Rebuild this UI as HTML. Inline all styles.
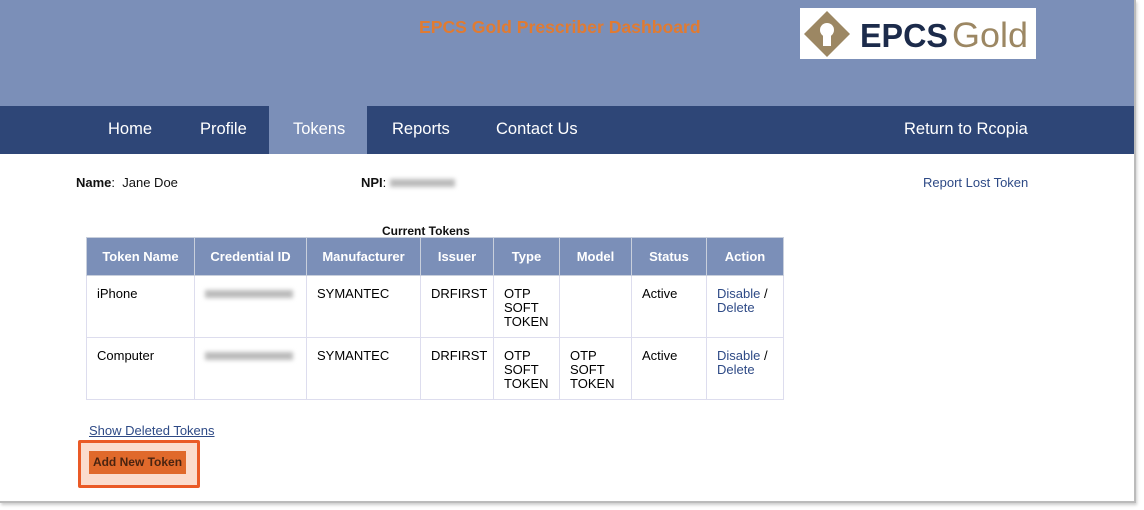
<!DOCTYPE html>
<html><head><style>
body{margin:0;width:1144px;height:510px;background:#fff;font-family:"Liberation Sans",Arial,sans-serif;position:relative;overflow:hidden}
.frame{position:absolute;left:0;top:0;width:1134px;height:501px;border-right:2px solid #bbb;border-bottom:2px solid #bbb;box-shadow:1px 2px 3px #ccc}
.hdr{position:absolute;left:0;top:0;width:1134px;height:106px;background:#7b8fb8}
.title{position:absolute;left:419px;top:17px;color:#e07b32;font-weight:bold;font-size:17.6px}
.logo{position:absolute;left:800px;top:8px;width:236px;height:51px;background:#fff}
.nav{position:absolute;left:0;top:106px;width:1134px;height:48px;background:#2e4677}
.nav span{position:absolute;top:14px;color:#fff;font-size:16.5px}
.tab{position:absolute;left:269px;top:106px;width:98px;height:48px;background:#7b8fb8}
.t{position:absolute;font-size:13px;color:#111}
a{color:#2e4a86;text-decoration:none}
table{position:absolute;left:86px;top:237px;border-collapse:collapse;font-size:13px;table-layout:fixed;width:697px}
th{background:#7b8fb8;color:#fff;height:37px;border:1px solid #c8cfdc;font-weight:bold;padding:0}
td{border:1px solid #dde;vertical-align:top;padding:11px 10px 0;height:50px;line-height:14px;overflow:hidden}
.blur{display:inline-block;width:88px;height:8px;background:#bbb;filter:blur(2px);margin-top:3px}
</style></head><body>
<div class="frame"></div>
<div class="hdr"></div>
<div class="title">EPCS Gold Prescriber Dashboard</div>
<div class="logo">
<svg width="236" height="51" viewBox="0 0 236 51"><polygon points="27,3 50,26 27,49 4,26" fill="#9c8763"/><circle cx="27" cy="22" r="7" fill="#fff"/><rect x="23" y="24" width="8" height="14" fill="#fff"/>
<text x="60" y="39" font-family="Liberation Sans" font-weight="bold" font-size="33" fill="#1c2b4b" textLength="88" lengthAdjust="spacingAndGlyphs">EPCS</text><text x="152" y="39" font-family="Liberation Sans" font-size="35" fill="#9c8763" textLength="76" lengthAdjust="spacingAndGlyphs">Gold</text></svg>
</div>
<div class="nav"></div><div class="tab"></div>
<div class="nav" style="background:none">
<span style="left:108px">Home</span><span style="left:200px">Profile</span><span style="left:293px">Tokens</span><span style="left:392px">Reports</span><span style="left:496px">Contact Us</span><span style="left:904px">Return to Rcopia</span></div>
<div class="t" style="left:76px;top:175px"><b>Name</b>:&nbsp; Jane Doe</div>
<div class="t" style="left:361px;top:175px"><b>NPI</b>: <span class="blur" style="width:65px"></span></div>
<div class="t" style="left:923px;top:175px"><a>Report Lost Token</a></div>
<div class="t" style="left:382px;top:224px;font-weight:bold;font-size:12px">Current Tokens</div>
<table>
<colgroup><col style="width:108px"><col style="width:112px"><col style="width:114px"><col style="width:73px"><col style="width:66px"><col style="width:72px"><col style="width:75px"><col style="width:77px"></colgroup>
<tr><th>Token Name</th><th>Credential ID</th><th>Manufacturer</th><th>Issuer</th><th>Type</th><th>Model</th><th>Status</th><th>Action</th></tr>
<tr><td>iPhone</td><td><span class="blur"></span></td><td>SYMANTEC</td><td>DRFIRST</td><td>OTP<br>SOFT<br>TOKEN</td><td></td><td>Active</td><td><a>Disable</a> /<br><a>Delete</a></td></tr>
<tr><td>Computer</td><td><span class="blur"></span></td><td>SYMANTEC</td><td>DRFIRST</td><td>OTP<br>SOFT<br>TOKEN</td><td>OTP<br>SOFT<br>TOKEN</td><td>Active</td><td><a>Disable</a> /<br><a>Delete</a></td></tr>
</table>
<div class="t" style="left:89px;top:423px"><a style="text-decoration:underline">Show Deleted Tokens</a></div>
<div style="position:absolute;left:78px;top:440px;width:116px;height:42px;border:3px solid #ea5a26;background:#fbdccd;border-radius:2px"></div>
<div style="position:absolute;left:89px;top:451px;width:97px;height:23px;background:#e0692b;color:#4a2410;font-weight:bold;font-size:12px;line-height:23px;text-align:center">Add New Token</div>
</body></html>
